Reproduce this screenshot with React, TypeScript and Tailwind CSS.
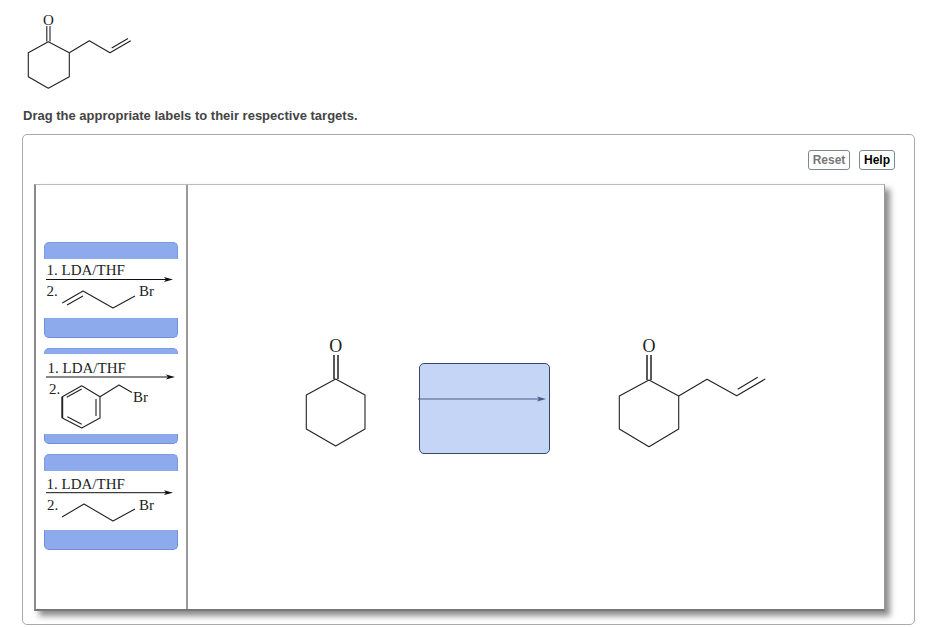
const serif = "font-['Liberation_Serif',serif]";

function Lines({ d, w = 1.1, c = "#222" }: { d: string; w?: number; c?: string }) {
  return <path d={d} fill="none" stroke={c} strokeWidth={w} strokeLinejoin="round" />;
}

function Arrow({ x1, x2, y }: { x1: number; x2: number; y: number }) {
  return (
    <g>
      <line x1={x1} x2={x2 - 4} y1={y} y2={y} stroke="#111" strokeWidth={1} />
      <path d={`M${x2 - 9} ${y - 2.4} L${x2} ${y} L${x2 - 9} ${y + 2.4} L${x2 - 7} ${y} Z`} fill="#111" />
    </g>
  );
}

function T({ x, y, children }: { x: number; y: number; children: React.ReactNode }) {
  return (
    <text x={x} y={y} fontSize={15} fill="#222" className={serif}>
      {children}
    </text>
  );
}

function Card({ top, bottom, view, h, children }: { top: number; bottom: number; view: string; h: number; children: React.ReactNode }) {
  return (
    <div className="flex flex-col w-[134px]">
      <div className="bg-[#8dabec] border border-b-0 border-[#7c9be0] rounded-t-[5px]" style={{ height: top }} />
      <svg width={134} height={h} viewBox={view} className="block bg-white">
        {children}
      </svg>
      <div className="bg-[#8dabec] border border-t-0 border-[#6f90d8] rounded-b-[5px]" style={{ height: bottom }} />
    </div>
  );
}

export default function App() {
  return (
    <div className="w-[937px] h-[627px] bg-white overflow-hidden flex flex-col font-['Liberation_Sans',Arial,sans-serif]">
      <svg width={140} height={100} viewBox="0 0 140 100" className="block shrink-0">
        <text x={48.3} y={24.5} fontSize={15} textAnchor="middle" fill="#222" className={serif}>O</text>
        <Lines d="M46.8 26 V41.5 M50 26 V41.5" />
        <Lines d="M48.3 41.7 L69.3 52.7 V76.7 L48.3 88.3 L28.3 76.7 V52.7 Z" />
        <Lines d="M69.3 52.7 L89.3 40.7 L110 52.7 L130.7 40.7 M111.7 48 L128 38.6" />
      </svg>

      <h1 className="ml-[23px] mt-[8px] text-[13px] leading-[15px] font-bold text-[#444] tracking-normal">
        Drag the appropriate labels to their respective targets.
      </h1>

      <div className="ml-[22px] mt-[11px] w-[893px] h-[491px] border border-[#aaa] rounded-[5px] flex flex-col pt-[15px] pl-[11px]">
        <div className="flex justify-end gap-[9px] pr-[19px]">
          <button className="w-[42px] h-[20px] border border-[#7b8a8f] rounded-[3px] text-[12px] font-bold text-[#777] bg-white">Reset</button>
          <button className="w-[36px] h-[20px] border border-[#7b8a8f] rounded-[3px] text-[12px] font-bold text-black bg-white">Help</button>
        </div>

        <div className="mt-[14px] w-[851px] h-[427px] flex border-t border-t-[#bbb] border-l-2 border-l-[#8a8a8a] border-b-2 border-b-[#777] border-r border-r-[#999] bg-white shadow-[5px_5px_6px_rgba(0,0,0,0.45)]">
          <div className="w-[152px] shrink-0 border-r-2 border-[#999] pt-[57px] pl-[8px] flex flex-col gap-[10px]">
            <Card top={17} bottom={20} view="44 259 134 59" h={59}>
              <T x={46.5} y={275}>1. LDA/THF</T>
              <Arrow x1={46} x2={173} y={279.5} />
              <T x={46.5} y={296}>2.</T>
              <Lines d="M62.3 303 L83 291 L113 308 L135 296 M67 305 L83 296" />
              <T x={139} y={296}>Br</T>
            </Card>
            <Card top={6} bottom={10} view="44 354 134 80" h={80}>
              <T x={47.5} y={373}>1. LDA/THF</T>
              <Arrow x1={46} x2={175} y={377} />
              <T x={49} y={394}>2.</T>
              <Lines d="M81.7 385.7 L100 396.7 V418 L81.7 428 L62.3 418 V396.7 Z" />
              <Lines d="M62.3 396.7 V418" w={1.8} />
              <Lines d="M66.7 397.3 L81.7 389 M96 399 V416 M67.3 416.7 L81.7 424.3" />
              <Lines d="M100 396.7 L119 385 L132 392.5" />
              <T x={133} y={402}>Br</T>
            </Card>
            <Card top={17} bottom={20} view="44 471 134 59" h={59}>
              <T x={46.5} y={489}>1. LDA/THF</T>
              <Arrow x1={46} x2={173} y={492.7} />
              <T x={47} y={510}>2.</T>
              <Lines d="M62 517 L84 504 L113 521 L135 509" />
              <T x={139} y={510}>Br</T>
            </Card>
          </div>

          <div className="flex-1 flex items-center pt-[23px] pl-[112px]">
            <svg width={80} height={147} viewBox="300 335 80 147" className="block shrink-0">
              <text x={335.7} y={352} fontSize={18} textAnchor="middle" fill="#222" className={serif}>O</text>
              <Lines d="M334 355 V379 M338 355 V379" w={1.5} />
              <Lines d="M335.7 379 L365 395 V429 L335.7 446 L306.3 429 V395 Z" />
            </svg>
            <div className="relative ml-[39px] w-[131px] h-[91px] shrink-0 rounded-[5px] border border-[#3a4868] bg-[#c5d5f5]">
              <svg width={131} height={10} viewBox="0 0 131 10" className="absolute left-[-2px] top-[30px] overflow-visible">
                <line x1={0} x2={123} y1={5} y2={5} stroke="#4a5a88" strokeWidth={1} />
                <path d="M119 2.6 L128 5 L119 7.4 L121 5 Z" fill="#4a5a88" />
              </svg>
            </div>
            <svg width={160} height={147} viewBox="610 335 160 147" className="block shrink-0 ml-[61px]">
              <text x={648} y={352} fontSize={18} textAnchor="middle" fill="#222" className={serif}>O</text>
              <Lines d="M646 355 V380 M650 355 V380" w={1.5} />
              <Lines d="M648 380 L677.7 396 V429 L648 446.7 L618.3 429 V396 Z" />
              <Lines d="M677.7 396 L706 379.3 L735.7 395.7 L764.3 379 M736.7 389.3 L756.7 377.3" />
            </svg>
          </div>
        </div>
      </div>
    </div>
  );
}
